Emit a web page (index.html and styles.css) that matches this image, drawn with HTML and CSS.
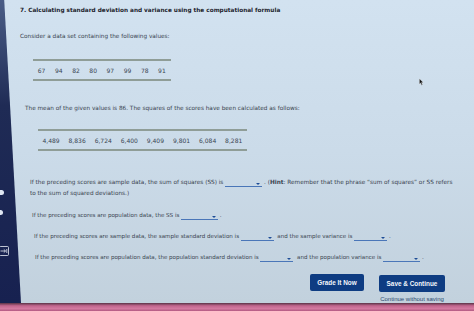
FILE: index.html
```html
<!DOCTYPE html>
<html lang="en">
<head>
    <meta charset="UTF-8">
    <meta name="viewport" content="width=device-width, initial-scale=1.0">
    <title>Standard deviation and variance</title>
    <link rel="stylesheet" href="styles.css">
</head>
<body>
    <div class="screen">
        <aside class="rail">
            <span class="rail-dot dot-a"></span>
            <span class="rail-dot dot-b"></span>
            <span class="rail-icon">
                <svg viewBox="0 0 10 10" width="10" height="10">
                    <rect x="0.5" y="0.5" width="9" height="9" rx="1" fill="none" stroke="#e8ecf5" stroke-width="0.8"/>
                    <path d="M1.5 5 H6.5 M4.8 3.4 L6.5 5 L4.8 6.6 M7.8 3 V7" fill="none" stroke="#e8ecf5" stroke-width="0.8"/>
                </svg>
            </span>
        </aside>
        <main class="page">
            <h1 class="title">7. Calculating standard deviation and variance using the computational formula</h1>
            <p class="intro">Consider a data set containing the following values:</p>
            <table class="values scores">
                <tr>
                    <td>67</td><td>94</td><td>82</td><td>80</td><td>97</td><td>99</td><td>78</td><td>91</td>
                </tr>
            </table>
            <p class="mean">The mean of the given values is 86. The squares of the scores have been calculated as follows:</p>
            <table class="values squares">
                <tr>
                    <td>4,489</td><td>8,836</td><td>6,724</td><td>6,400</td><td>9,409</td><td>9,801</td><td>6,084</td><td>8,281</td>
                </tr>
            </table>
            <p class="q q1">If the preceding scores are sample data, the sum of squares (SS) is <span class="drop"></span> . (<b>Hint</b>: Remember that the phrase “sum of squares” or SS refers<br>to the sum of squared deviations.)</p>
            <p class="q q2">If the preceding scores are population data, the SS is <span class="drop"></span> .</p>
            <p class="q q3">If the preceding scores are sample data, the sample standard deviation is <span class="drop short"></span> &nbsp;and the sample variance is <span class="drop short"></span> .</p>
            <p class="q q4">If the preceding scores are population data, the population standard deviation is <span class="drop short"></span> &nbsp;and the population variance is <span class="drop"></span> .</p>
            <div class="actions">
                <button class="btn grade">Grade It Now</button>
                <div class="save-group">
                    <button class="btn save">Save &amp; Continue</button>
                    <a class="skip" href="#">Continue without saving</a>
                </div>
            </div>
        </main>
        <svg class="cursor" viewBox="0 0 6 9" width="5" height="8">
            <path d="M0.5 0.5 L0.5 7 L2 5.6 L3.2 8.3 L4.2 7.8 L3 5.2 L5 5.2 Z" fill="#111" stroke="#eee" stroke-width="0.4"/>
        </svg>
    </div>
    <div class="floor"></div>
</body>
</html>
```

FILE: styles.css
```css
body {
    margin: 0;
    font-family: "DejaVu Sans", Verdana, sans-serif;
    color: #39434f;
    background: #c4d3df;
}

.screen {
    position: relative;
    display: flex;
    height: 303px;
    background: linear-gradient(180deg, #d2e2f0 0%, #cbdbe9 50%, #c2d1dd 100%);
    overflow: hidden;
}

/* dark side rail, seen at an angle */
.rail {
    flex: 0 0 21px;
    position: relative;
    background: linear-gradient(180deg, #4a5d86 0%, #1f2b55 35%, #172150 100%);
    clip-path: polygon(0 0, 20% 0, 100% 100%, 0 100%);
}

.rail-dot {
    position: absolute;
    left: 0;
    width: 4px;
    height: 5px;
    border-radius: 0 3px 3px 0;
    background: #dfe6f2;
}

.dot-a { top: 190px; }
.dot-b { top: 210px; width: 3px; }

.rail-icon {
    position: absolute;
    left: -1px;
    top: 246px;
    line-height: 0;
}

.page {
    flex: 1;
    display: flex;
    flex-direction: column;
    align-items: flex-start;
    font-size: 5.75px;
}

.title {
    margin: 5px 0 0 -1px;
    font-size: 5.75px;
    line-height: 10px;
    font-weight: bold;
    color: #1c222c;
}

.intro {
    margin: 16px 0 0 -1px;
    line-height: 10px;
}

.values {
    border-collapse: collapse;
    border-top: 2px solid #8f9d97;
    border-bottom: 2px solid #8f9d97;
    font-size: 6px;
    color: #3a4552;
}

.values td {
    padding: 0;
    height: 18px;
    text-align: center;
}

.scores {
    margin: 18px 0 0 12px;
}

.scores td {
    width: 17.2px;
}

.mean {
    margin: 22px 0 0 4px;
    line-height: 10px;
}

.squares {
    margin: 16px 0 0 17px;
}

.squares td {
    width: 26.1px;
}

.q {
    margin: 10px 0 0 9px;
    line-height: 11px;
    font-size: 5.55px;
}

.q1 { margin-top: 25.5px; font-size: 5.75px; }
.q2 { margin-top: 11px; margin-left: 11px; }
.q3 { margin-left: 13px; }
.q4 { margin-left: 14px; }

.drop {
    display: inline-flex;
    justify-content: flex-end;
    align-items: center;
    width: 37px;
    height: 5px;
    vertical-align: -1px;
    border-bottom: 1px solid #4a76b8;
}

.drop.short {
    width: 33px;
}

.drop::after {
    content: '';
    margin-right: 2px;
    border-left: 2.2px solid transparent;
    border-right: 2.2px solid transparent;
    border-top: 2.6px solid #1e4d96;
}

.actions {
    display: flex;
    align-items: flex-start;
    gap: 15px;
    margin: 11.5px 0 0 289px;
}

.btn {
    height: 17px;
    padding: 0;
    border: none;
    border-radius: 2px;
    background: #0e3c82;
    color: #f2f5fb;
    font-family: "Liberation Sans", Arial, sans-serif;
    font-weight: bold;
    font-size: 6.4px;
}

.grade {
    width: 54px;
}

.save-group {
    display: flex;
    flex-direction: column;
    align-items: center;
    margin-top: 1px;
}

.save {
    width: 66px;
}

.skip {
    margin-top: 2px;
    line-height: 10px;
    font-family: "Liberation Sans", Arial, sans-serif;
    font-size: 6px;
    color: #2c4a6e;
    text-decoration: none;
}

.cursor {
    position: absolute;
    left: 419px;
    top: 78px;
}

.floor {
    height: 8px;
    background: linear-gradient(180deg, #5a3346 0%, #c2668e 35%, #d37aa0 70%, #b35a82 100%);
}
```
